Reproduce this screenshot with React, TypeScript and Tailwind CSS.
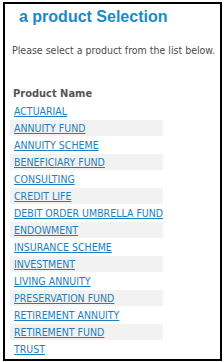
const products = [
  'ACTUARIAL',
  'ANNUITY FUND',
  'ANNUITY SCHEME',
  'BENEFICIARY FUND',
  'CONSULTING',
  'CREDIT LIFE',
  'DEBIT ORDER UMBRELLA FUND',
  'ENDOWMENT',
  'INSURANCE SCHEME',
  'INVESTMENT',
  'LIVING ANNUITY',
  'PRESERVATION FUND',
  'RETIREMENT ANNUITY',
  'RETIREMENT FUND',
  'TRUST',
];

export default function App() {
  return (
    <div className="w-[224px] h-[362px] bg-white pt-[2px] pl-[3px] font-['DejaVu_Sans_Condensed','Liberation_Sans',sans-serif] overflow-hidden">
      <div className="w-[219px] h-[359px] border-2 border-black overflow-hidden">
        <h1 className="h-[24px] pl-[14px] pt-[3px] font-['Liberation_Sans',Arial,sans-serif] text-[16px] leading-[20px] font-bold text-[#1a8ac6] whitespace-nowrap">
          a product Selection
        </h1>
        <p className="mt-[16px] pl-[7px] text-[10.5px] leading-[13px] text-[#4d4d4d] whitespace-nowrap">
          Please select a product from the list below.
        </p>
        <div className="mt-[29px] pl-[5px] flex flex-col gap-px">
          <div className="h-4 pl-[3px] text-[11px] leading-4 font-bold text-[#555]">Product Name</div>
          {products.map((p, i) => (
            <div
              key={p}
              className={`h-4 w-[153px] pl-[4px] text-[10.5px] leading-4 whitespace-nowrap ${i % 2 === 1 ? 'bg-[#f2f2f2]' : ''}`}
            >
              <a href="#" className="text-[#1b7fc0] underline">
                {p}
              </a>
            </div>
          ))}
        </div>
      </div>
    </div>
  );
}
